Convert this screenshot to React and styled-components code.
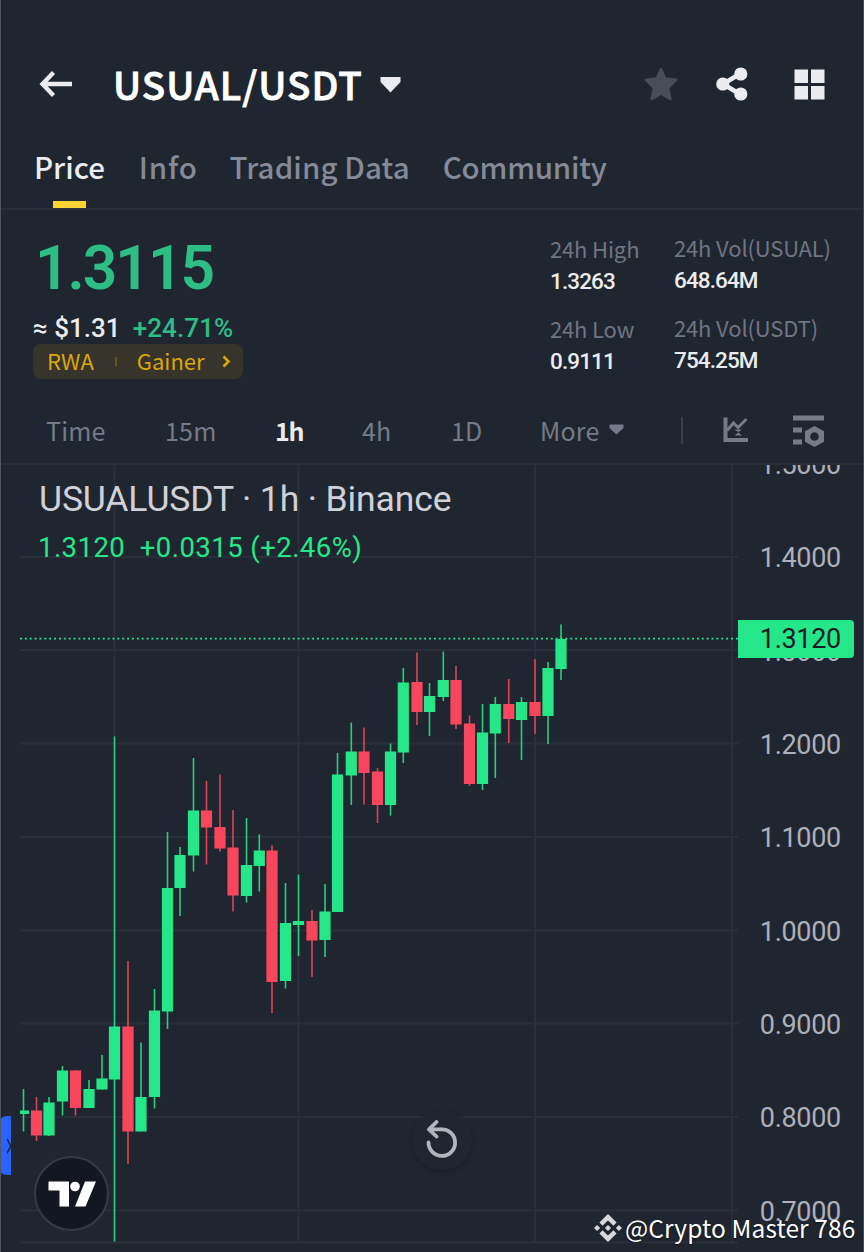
import React, { useState } from 'react';
import styled, { createGlobalStyle } from 'styled-components';

const TEXT = "'Noto Sans CJK SC', 'Noto Sans', sans-serif";
const DIGITS = "Roboto, 'Liberation Sans', sans-serif";

const GlobalStyle = createGlobalStyle`
  * {
    box-sizing: border-box;
  }

  body {
    margin: 0;
    background: #202630;
  }
`;

const Screen = styled.div`
  position: relative;
  display: flex;
  flex-direction: column;
  width: 864px;
  height: 1252px;
  overflow: hidden;
  background: #202630;
  border-left: 1px solid #50555f;
  border-right: 1px solid #464c57;
  font-family: ${TEXT};
  color: #eaecef;
  white-space: nowrap;
`;

const Header = styled.header`
  display: flex;
  align-items: center;
  height: 86px;
  margin-top: 41px;
  padding: 0 38px 0 37px;
`;

const Pair = styled.h1`
  margin: -2px 17px 0 41px;
  font-family: ${TEXT};
  font-size: 38.5px;
  font-weight: 500;
  line-height: 46px;
  letter-spacing: 1px;
  color: #fff;
  -webkit-text-stroke: 0.8px #fff;
`;

const HeaderActions = styled.div`
  display: flex;
  align-items: center;
  margin-left: auto;
`;

const Icon = styled.svg`
  display: block;
  flex: none;
  margin-left: ${(props) => props.$left || 0}px;
  margin-top: ${(props) => props.$top || 0}px;
`;

const Tabs = styled.nav`
  display: flex;
  height: 83px;
  padding-left: 33px;
  border-bottom: 2px solid #29303a;
`;

const Tab = styled.button`
  display: flex;
  flex-direction: column;
  align-items: center;
  justify-content: space-between;
  margin: 0 ${(props) => props.$gap}px 0 0;
  padding: 18px 0 0;
  border: 0;
  background: none;
  font-family: ${TEXT};
  font-size: 29.5px;
  font-weight: 500;
  line-height: 42px;
  letter-spacing: ${(props) => props.$spacing}px;
  color: ${(props) => (props.$active ? '#eaecef' : '#848a98')};

  &::after {
    content: '';
    width: 33px;
    height: 7px;
    background: ${(props) => (props.$active ? '#fcd535' : 'transparent')};
  }
`;

const Summary = styled.section`
  display: flex;
  height: 188px;
  padding-left: 32px;
`;

const Quote = styled.div`
  display: flex;
  flex-direction: column;
  align-items: flex-start;
  width: 517px;
  padding-top: 29px;
`;

const LastPrice = styled.div`
  margin-left: 2px;
  font-family: ${DIGITS};
  font-size: 60.5px;
  font-weight: 600;
  line-height: 60px;
  letter-spacing: -2px;
  color: #2ebd85;
`;

const Converted = styled.div`
  display: flex;
  gap: 12px;
  margin-top: 13px;
  font-family: ${DIGITS};
  font-size: 26px;
  font-weight: 500;
  line-height: 32px;
`;

const Change = styled.span`
  color: #2ebd85;
  letter-spacing: 0.1px;
`;

const Badge = styled.div`
  display: flex;
  align-items: center;
  width: 210px;
  height: 35px;
  padding: 0 13px 0 14px;
  border-radius: 8px;
  background: #37342c;
  font-size: 22px;
  line-height: 31px;
  color: #d9a70c;
`;

const BadgeText = styled.span`
  margin-top: -3px;
`;

const BadgeDivider = styled.span`
  flex: none;
  width: 2px;
  height: 9px;
  margin: -1px 20px 0 21px;
  background: #655422;
`;

const Stats = styled.div`
  display: flex;
`;

const StatColumn = styled.div`
  width: 124px;
  padding-top: ${(props) => props.$top}px;
`;

const Stat = styled.div`
  height: 80px;
`;

const StatLabel = styled.div`
  font-size: 22px;
  line-height: 32px;
  letter-spacing: -0.15px;
  color: #6f7582;
`;

const StatValue = styled.div`
  margin-top: 2px;
  font-family: ${DIGITS};
  font-size: 22.5px;
  font-weight: 500;
  line-height: 30px;
  letter-spacing: -0.9px;
`;

const Intervals = styled.div`
  display: flex;
  align-items: center;
  height: 67px;
  padding: 0 0 1px 45px;
  border-bottom: 2px solid #29303a;
`;

const Interval = styled.button`
  width: ${(props) => props.$width}px;
  padding: 0;
  border: 0;
  background: none;
  font-family: ${TEXT};
  font-size: 25px;
  font-weight: ${(props) => (props.$active ? 700 : 400)};
  line-height: 36px;
  text-align: left;
  letter-spacing: ${(props) => (props.$active ? -1.2 : 0.2)}px;
  color: ${(props) => (props.$active ? '#eaecef' : '#757b89')};
`;

const Divider = styled.span`
  width: 2px;
  height: 27px;
  margin-left: 57px;
  background: #3a404b;
`;

const Chart = styled.section`
  position: relative;
  display: flex;
  flex: 1;
  min-height: 0;
  overflow: hidden;
  font-family: ${DIGITS};
`;

const Legend = styled.div`
  position: absolute;
  top: 11px;
  left: 38px;
`;

const LegendTitle = styled.div`
  font-size: 35.5px;
  line-height: 46px;
  letter-spacing: -0.13px;
  color: #cfd1d9;
`;

const LegendValues = styled.div`
  margin: 8px 0 0 -1px;
  font-size: 27.5px;
  line-height: 36px;
  letter-spacing: 0.45px;
  white-space: pre;
  color: #26e68a;
`;

const PriceAxis = styled.div`
  width: 102px;
  margin-top: -46px;
`;

const AxisLabel = styled.div`
  height: 93.35px;
  font-size: 27px;
  line-height: 93.35px;
  letter-spacing: -0.3px;
  text-align: right;
  color: #adb0ba;
`;

const PriceTag = styled.div`
  position: absolute;
  top: 155px;
  left: 737px;
  width: 116px;
  height: 38px;
  padding-right: 13px;
  border-radius: 0 4px 4px 0;
  background: #26e68a;
  font-size: 27px;
  line-height: 39px;
  letter-spacing: -0.3px;
  text-align: right;
  color: #141c24;
`;

const Floating = styled.div`
  position: absolute;
  left: ${(props) => props.$left}px;
  top: ${(props) => props.$top}px;
  display: flex;
  align-items: center;
  justify-content: center;
`;

const ResetButton = styled(Floating)`
  width: 60px;
  height: 60px;
  border-radius: 50%;
  background: #202630;
  box-shadow: 0 2px 5px rgba(10, 14, 20, 0.4);
`;

const ChartLogo = styled(Floating)`
  width: 75px;
  height: 75px;
  border: 2px solid #363a45;
  border-radius: 50%;
  background: #131722;
`;

const Handle = styled(Floating)`
  width: 12px;
  height: 59px;
  justify-content: flex-end;
  border-radius: 8px 0 0 8px;
  background: #2962ff;
`;

const Author = styled(Floating)`
  gap: 3px;
  font-family: ${TEXT};
  font-size: 24.5px;
  line-height: 32px;
  letter-spacing: 0.1px;
  color: #fff;
  text-shadow: 0 1px 2px rgba(0, 0, 0, 0.6);
`;

const UP = '#26e68a';
const DOWN = '#f7465d';

const priceLevels = ['1.5000', '1.4000', '1.3000', '1.2000', '1.1000', '1.0000', '0.9000', '0.8000', '0.7000'];

const gridRows = [557, 650, 743.5, 837, 930.5, 1023.5, 1117, 1210.5, 1242.5];
const gridColumns = [114.5, 298.5, 535, 732];

// x, wick top, body top, body bottom, wick bottom, rising
const candles = [
  [23.5, 1089, 1110.5, 1114, 1131.5, 1],
  [36.5, 1097, 1110.5, 1135.5, 1141, 0],
  [49, 1097, 1102.5, 1135.5, 1136, 1],
  [62.5, 1066, 1070.5, 1101.5, 1115.5, 1],
  [75.5, 1070, 1070.5, 1108, 1115.5, 0],
  [89, 1080, 1089, 1108, 1108, 1],
  [102, 1055, 1078.5, 1089.5, 1089.5, 1],
  [114.5, 736.5, 1026.5, 1079.5, 1241.5, 1],
  [128, 961, 1026.5, 1131.5, 1164, 0],
  [141, 1042.5, 1097, 1131.5, 1131.5, 1],
  [154.5, 989, 1010.5, 1097, 1108.5, 1],
  [167.5, 832, 888, 1011.5, 1029, 1],
  [180, 847, 855, 888, 916, 1],
  [193.5, 758, 810.5, 855.5, 871.5, 1],
  [206.5, 781, 810.5, 827.5, 864.5, 0],
  [220, 774.5, 827, 848.5, 851.5, 0],
  [233, 810, 847.5, 895.5, 911.5, 0],
  [246.5, 818, 865, 896, 902.5, 1],
  [259.3, 834.5, 850.5, 866, 891.5, 1],
  [272, 845.5, 850.5, 982, 1013, 0],
  [285.5, 883, 923, 981, 988.5, 1],
  [298.5, 874.5, 921, 925, 956, 1],
  [312, 910, 921, 940.5, 977, 0],
  [325, 884, 911.5, 940, 957, 1],
  [337.5, 753, 774.5, 912, 912, 1],
  [351.3, 722.5, 751.5, 775.5, 805, 1],
  [364, 727.5, 751.5, 773, 804.5, 0],
  [377.5, 768, 771.5, 805, 823, 0],
  [390.5, 743.5, 751.5, 805, 815.5, 1],
  [403.3, 668, 682.5, 752.5, 763, 1],
  [417, 652.5, 682, 712, 725, 0],
  [429.5, 683, 696, 712, 736, 1],
  [443.3, 651.5, 680, 697, 701, 1],
  [456, 666, 680, 724.5, 729, 0],
  [469.5, 715.5, 723.5, 784, 786, 0],
  [482.5, 704, 732.5, 784, 790, 1],
  [495.3, 697, 704, 733.5, 778, 1],
  [508.8, 679, 704, 719, 743, 0],
  [521.5, 697, 702, 720, 760, 1],
  [535, 659, 702, 716, 734, 0],
  [548, 662, 668, 716, 744, 1],
  [561, 624.5, 639, 669, 680, 1],
];

const intervals = [
  { label: 'Time', width: 119 },
  { label: '15m', width: 110 },
  { label: '1h', width: 87 },
  { label: '4h', width: 89 },
  { label: '1D', width: 89 },
  { label: 'More', width: 69 },
];

const tabs = [
  { label: 'Price', spacing: 0, gap: 34 },
  { label: 'Info', spacing: 0.8, gap: 32 },
  { label: 'Trading Data', spacing: 0.1, gap: 33 },
  { label: 'Community', spacing: -0.2, gap: 0 },
];

function CandleChart() {
  return (
    <svg width="738" height="787" viewBox="1 465 738 787" style={{ flex: 'none' }}>
      <g stroke="#29303a" strokeWidth="2">
        {gridRows.map((y) => (
          <line key={y} x1="20" x2="738" y1={y} y2={y} />
        ))}
        {gridColumns.map((x) => (
          <line key={x} x1={x} x2={x} y1="464" y2="1242" />
        ))}
      </g>
      <line x1="20" x2="738" y1="638.7" y2="638.7" stroke={UP} strokeWidth="1.8" strokeDasharray="1.9 2.97" />
      {candles.map(([x, high, top, bottom, low, rising]) => {
        const left = Math.max(x - 5.6, 20);
        return (
          <g key={x} fill={rising ? UP : DOWN}>
            <rect x={x - 0.8} y={high} width="1.6" height={low - high} opacity="0.88" />
            <rect x={left} y={top} width={x + 5.6 - left} height={bottom - top} />
          </g>
        );
      })}
    </svg>
  );
}

export default function App() {
  const [activeTab, setActiveTab] = useState('Price');
  const [activeInterval, setActiveInterval] = useState('1h');

  return (
    <>
      <GlobalStyle />
      <Screen>
        <Header>
          <Icon width="34" height="28" viewBox="0 0 34 28" fill="none" stroke="#eaecef" strokeWidth="4.4">
            <path d="M34 14H4M15.500 2.500L4.500 14l11 11.500" />
          </Icon>
          <Pair>USUAL/USDT</Pair>
          <Icon width="21" height="17" viewBox="0 0 21 17" fill="#eaecef">
            <path d="M.5 1h20v5L10.500 16.500.5 6z" />
          </Icon>
          <HeaderActions>
            <Icon width="34" height="34" viewBox="0 0 34 34" fill="#474d59" stroke="#474d59" strokeWidth="3" strokeLinejoin="round">
              <path d="M17 2.500l4 9.300 10.800 1.200-8 7.700 2.300 11L17 26.200 7.900 31.700l2.300-11-8-7.700L13 11.800z" />
            </Icon>
            <Icon $left={38} width="32" height="34" viewBox="0 0 32 34" fill="#eaecef">
              <path d="M24.500 6.500L7 17l17.500 10.500" fill="none" stroke="#eaecef" strokeWidth="4.500" />
              <circle cx="24.800" cy="7" r="6.600" />
              <circle cx="6.800" cy="17" r="6.600" />
              <circle cx="24.800" cy="27" r="6.600" />
            </Icon>
            <Icon $left={46} width="31" height="31" viewBox="0 0 31 31" fill="#eaecef">
              <path d="M.5.5h13.500v13.500H.5zM17 .5h13.500v13.500H17zM.5 17h13.500v13.500H.5zM17 17h13.500v13.500H17z" />
            </Icon>
          </HeaderActions>
        </Header>

        <Tabs>
          {tabs.map((tab) => (
            <Tab
              key={tab.label}
              $active={tab.label === activeTab}
              $spacing={tab.spacing}
              $gap={tab.gap}
              onClick={() => setActiveTab(tab.label)}
            >
              {tab.label}
            </Tab>
          ))}
        </Tabs>

        <Summary>
          <Quote>
            <LastPrice>1.3115</LastPrice>
            <Converted>
              <span>≈ $1.31</span>
              <Change>+24.71%</Change>
            </Converted>
            <Badge>
              <BadgeText>RWA</BadgeText>
              <BadgeDivider />
              <BadgeText>Gainer</BadgeText>
              <Icon $left={17} $top={-1} width="9" height="13" viewBox="0 0 9 13" fill="none" stroke="#d9a70c" strokeWidth="2.600">
                <path d="M1.500 1.500l5 5-5 5" />
              </Icon>
            </Badge>
          </Quote>
          <Stats>
            <StatColumn $top={22}>
              <Stat>
                <StatLabel>24h High</StatLabel>
                <StatValue>1.3263</StatValue>
              </Stat>
              <Stat>
                <StatLabel>24h Low</StatLabel>
                <StatValue>0.9111</StatValue>
              </Stat>
            </StatColumn>
            <StatColumn $top={21}>
              <Stat>
                <StatLabel>24h Vol(USUAL)</StatLabel>
                <StatValue>648.64M</StatValue>
              </Stat>
              <Stat>
                <StatLabel>24h Vol(USDT)</StatLabel>
                <StatValue>754.25M</StatValue>
              </Stat>
            </StatColumn>
          </Stats>
        </Summary>

        <Intervals>
          {intervals.map((interval) => (
            <Interval
              key={interval.label}
              $width={interval.width}
              $active={interval.label === activeInterval}
              onClick={() => setActiveInterval(interval.label)}
            >
              {interval.label}
            </Interval>
          ))}
          <Icon $top={-2} width="15" height="11" viewBox="0 0 15 11" fill="#757b89">
            <path d="M.5.5h14v3.500l-7 6.500-7-6.500z" />
          </Icon>
          <Divider />
          <Icon $left={40} width="26" height="26" viewBox="0 0 26 26" fill="none" stroke="#757b89">
            <path d="M2.500.5v22.500h22.500" strokeWidth="4" />
            <path d="M4 13.500l6.500-7.500 4.500 4.500 8.500-8.500" strokeWidth="3" />
            <path d="M11.500 12.500h7.500l-3.700 2.500zM11.500 18.500h7.500l-3.700-3z" fill="#757b89" stroke="none" />
          </Icon>
          <Icon $left={44} $top={1} width="31" height="32" viewBox="0 0 31 32" fill="#757b89">
            <path d="M0 .5h31v5H0zM0 12.500h9v5H0zM0 24.500h9v5H0z" />
            <path fillRule="evenodd" d="M21.500 11l9.500 5.300v10.400L21.500 32 12 26.700V16.300zM21.500 17.200a4.300 4.300 0 100 8.600 4.300 4.300 0 000-8.600z" />
          </Icon>
        </Intervals>

        <Chart>
          <CandleChart />
          <PriceAxis>
            {priceLevels.map((level) => (
              <AxisLabel key={level}>{level}</AxisLabel>
            ))}
          </PriceAxis>
          <PriceTag>1.3120</PriceTag>
          <Legend>
            <LegendTitle>USUALUSDT · 1h · Binance</LegendTitle>
            <LegendValues>{'1.3120  +0.0315 (+2.46%)'}</LegendValues>
          </Legend>
          <ResetButton $left={411} $top={645}>
            <Icon width="34" height="40" viewBox="0 0 34 40" fill="none" stroke="#b2b5be" strokeWidth="3.800" strokeLinecap="round" strokeLinejoin="round">
              <path d="M3.500 22.500A13.300 13.300 0 1 0 16.800 9.300H5M11.500 2L4 9.300l7.500 7.200" />
            </Icon>
          </ResetButton>
          <ChartLogo $left={33} $top={691}>
            <Icon width="48" height="26" viewBox="0 0 48 26" fill="#fff">
              <path d="M.5.5h20.500v25H11.500V9.500H.5zM37 .5h11L37.500 25.500H27z" />
              <circle cx="27" cy="5.500" r="4.800" />
            </Icon>
          </ChartLogo>
          <Handle $left={-2} $top={651}>
            <Icon width="4" height="16" viewBox="0 0 4 16" fill="none" stroke="#202630" strokeWidth="1.600">
              <path d="M0 1l4 7-4 7" />
            </Icon>
          </Handle>
          <Author $left={593} $top={747}>
            <Icon width="28" height="28" viewBox="0 0 28 28" fill="#d5d6d8">
              <path d="M14 0l8.600 8.600-3.200 3.200L14 6.400l-5.400 5.400-3.200-3.200zM14 28l-8.600-8.600 3.200-3.200L14 21.600l5.400-5.400 3.200 3.200zM14 10.900l3.100 3.100-3.100 3.100-3.100-3.100zM3.100 10.900L6.200 14l-3.100 3.100L0 14zM24.900 10.900L28 14l-3.100 3.100-3.100-3.100z" />
            </Icon>
            <span>@Crypto Master 786</span>
          </Author>
        </Chart>
      </Screen>
    </>
  );
}
